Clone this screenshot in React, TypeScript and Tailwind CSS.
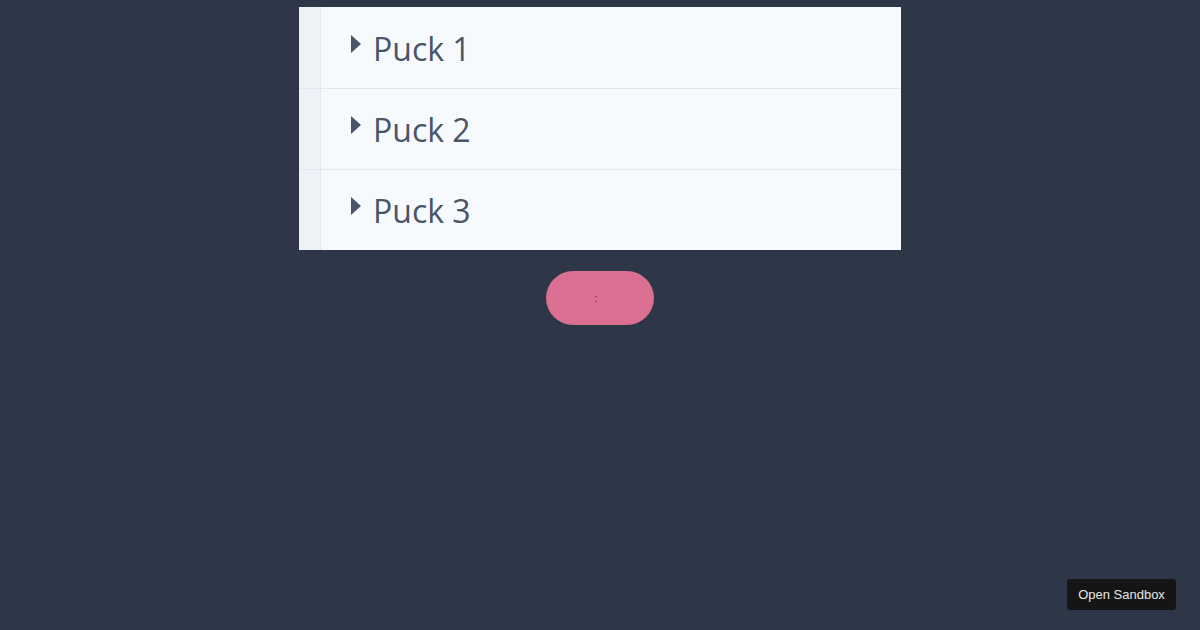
import React from "react";

function Row({ label, last, h }: { label: string; last?: boolean; h: string }) {
  return (
    <div className={`flex ${h} ${last ? "" : "border-b border-[#e2e8f0]"}`}>
      <div className="w-[22px] bg-[#edf2f7] border-r border-[#e2e8f0]" />
      <div className="flex flex-1 items-center pl-[30px] bg-[#f7fafc]">
        <svg width="10" height="18" viewBox="0 0 10 18" className="mr-[12px] mt-[-8px]">
          <path d="M0 0 L10 9 L0 18 Z" fill="#4a5568" />
        </svg>
        <span
          className="text-[32px] text-[#4a5568] leading-none mt-[2px]"
          style={{ fontFamily: '"Open Sans", sans-serif' }}
        >
          {label}
        </span>
      </div>
    </div>
  );
}

export default function App() {
  return (
    <div className="relative w-[1200px] h-[630px] bg-[#2d3748] overflow-hidden">
      <div className="flex flex-col items-center pt-[7px]">
        <div className="w-[602px] bg-[#f7fafc]">
          <Row label="Puck 1" h="h-[82px]" />
          <Row label="Puck 2" h="h-[81px]" />
          <Row label="Puck 3" h="h-[80px]" last />
        </div>
        <div className="mt-[21px] flex h-[54px] w-[108px] items-center justify-center rounded-full bg-[#db7093]">
          <span
            className="text-[11px] text-[#6b2040] mr-[8px] mt-[1px]"
            style={{ fontFamily: '"Liberation Sans", sans-serif' }}
          >
            :
          </span>
        </div>
      </div>
      <div
        className="absolute right-[24px] bottom-[20px] flex h-[31px] w-[109px] items-center justify-center rounded-[3px] bg-[#151515] text-[13px] text-[#e5e5e5]"
        style={{ fontFamily: '"Liberation Sans", Arial, sans-serif' }}
      >
        Open Sandbox
      </div>
    </div>
  );
}
